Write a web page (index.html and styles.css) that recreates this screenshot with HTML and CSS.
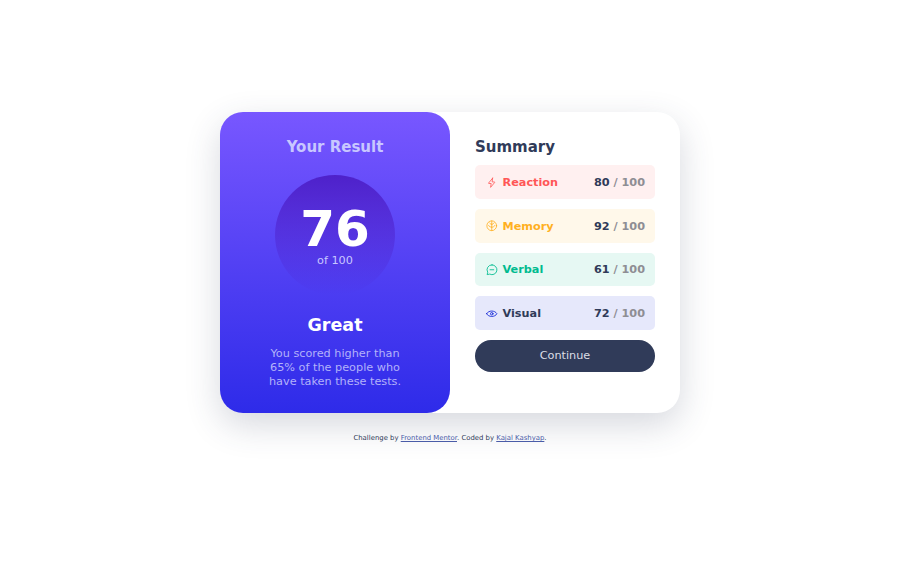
FILE: index.html
```html
<!DOCTYPE html>
<html>
<head>
  <meta name="viewport" content="width=device-width, initial-scale=1">
  <title>Results summary</title>
  <link rel="stylesheet" href="styles.css">
</head>
<body>

<main class="card">
  <section class="result">
    <h2 class="result-title">Your Result</h2>
    <div class="score-circle">
      <span class="score">76</span>
      <span class="score-of">of 100</span>
    </div>
    <h3 class="grade">Great</h3>
    <p class="result-text">You scored higher than 65% of the people who have taken these tests.</p>
  </section>

  <section class="summary">
    <h2 class="summary-title">Summary</h2>
    <ul class="summary-list">
      <li class="row reaction">
        <span class="row-name">
          <svg class="icon" viewBox="0 0 20 20" fill="none" stroke="currentColor" stroke-width="1.4" stroke-linecap="round" stroke-linejoin="round"><path d="M11.500 2 4.500 10.500c-.3.400 0 .8.400.8h4.100l-1 6.700 7.100-8.500c.3-.4 0-.9-.4-.9h-4l.8-6.600Z"/></svg>
          Reaction
        </span>
        <span class="row-score"><b>80</b> / 100</span>
      </li>
      <li class="row memory">
        <span class="row-name">
          <svg class="icon" viewBox="0 0 20 20" fill="none" stroke="currentColor" stroke-width="1.4" stroke-linecap="round" stroke-linejoin="round"><circle cx="10" cy="10" r="8.500"/><path d="M10 1.500v17M10 7.500C8.500 7.500 7 6.500 6 5M10 12.500c-2.500 0-4.500-1-5.500-3M10 7.500c1.500 0 3-1 4-2.500M10 12.500c2.500 0 4.500-1 5.500-3"/></svg>
          Memory
        </span>
        <span class="row-score"><b>92</b> / 100</span>
      </li>
      <li class="row verbal">
        <span class="row-name">
          <svg class="icon" viewBox="0 0 20 20" fill="none" stroke="currentColor" stroke-width="1.500" stroke-linecap="round" stroke-linejoin="round"><path d="M10.500 1.500a8.500 8.500 0 1 1-4 16l-4.500 1 1-4.200a8.500 8.500 0 0 1 7.500-12.800Z"/><path d="M7 10h6.500"/></svg>
          Verbal
        </span>
        <span class="row-score"><b>61</b> / 100</span>
      </li>
      <li class="row visual">
        <span class="row-name">
          <svg class="icon" viewBox="0 0 20 20" fill="none" stroke="currentColor" stroke-width="1.500" stroke-linecap="round" stroke-linejoin="round"><path d="M1 10C2.800 7 6.200 5.300 10 5.300s7.200 1.700 9 4.700c-1.800 3-5.200 4.700-9 4.700S2.800 13 1 10Z"/><circle cx="10" cy="10" r="2.200"/></svg>
          Visual
        </span>
        <span class="row-score"><b>72</b> / 100</span>
      </li>
    </ul>
    <button class="continue-btn">Continue</button>
  </section>
</main>

<footer class="attribution">
  Challenge by <a href="#">Frontend Mentor</a>. Coded by <a href="#">Kajal Kashyap</a>.
</footer>

</body>
</html>
```

FILE: styles.css
```css
* {
  box-sizing: border-box;
}

body {
  font-family: "DejaVu Sans", sans-serif;
  margin: 0;
  padding-top: 112px;
  min-height: 100vh;
  background-color: #fff;
  display: flex;
  flex-direction: column;
  align-items: center;
}

.card {
  display: flex;
  width: 460px;
  height: 301px;
  background-color: #fff;
  border-radius: 23px;
  box-shadow: 0 12px 35px rgba(48, 59, 89, 0.2);
}

.result {
  width: 230px;
  padding-top: 26px;
  border-radius: 23px;
  background: linear-gradient(180deg, #7857ff 0%, #2e2be9 100%);
  display: flex;
  flex-direction: column;
  align-items: center;
  text-align: center;
}

.result-title {
  margin: 0;
  font-size: 15px;
  line-height: 18px;
  font-weight: bold;
  color: #c8c7ff;
}

.score-circle {
  width: 120px;
  height: 120px;
  margin-top: 19px;
  padding-top: 5px;
  border-radius: 50%;
  background: linear-gradient(180deg, #4e21ca 0%, rgba(36, 33, 203, 0) 100%);
  display: flex;
  flex-direction: column;
  align-items: center;
  justify-content: center;
  gap: 3px;
}

.score {
  font-size: 50px;
  line-height: 44px;
  font-weight: bold;
  color: #fff;
}

.score-of {
  font-size: 11.250px;
  line-height: 14px;
  color: #c8c7ff;
}

.grade {
  margin: 19px 0 0;
  font-size: 17.500px;
  line-height: 22px;
  font-weight: bold;
  color: #fff;
}

.result-text {
  margin: 11px 0 0;
  width: 140px;
  font-size: 11.250px;
  line-height: 14px;
  color: #b3b2fa;
}

.summary {
  flex: 1;
  padding: 26px 25px 25px;
}

.summary-title {
  margin: 0;
  font-size: 15px;
  line-height: 18px;
  font-weight: bold;
  color: #303b59;
}

.summary-list {
  list-style: none;
  margin: 9px 0 0;
  padding: 0;
}

.row {
  display: flex;
  align-items: center;
  justify-content: space-between;
  height: 33.750px;
  margin-bottom: 10px;
  padding: 1px 10px 0 11px;
  border-radius: 5px;
  font-size: 11.250px;
  font-weight: bold;
}

.row-name {
  display: flex;
  align-items: center;
  gap: 5px;
}

.icon {
  width: 11.500px;
  height: 11.500px;
}

.row-score {
  color: #8e8e94;
}

.row-score b {
  color: #303b59;
}

.reaction {
  background-color: #fff0f0;
  color: #ff5757;
}

.memory {
  background-color: #fff8ea;
  color: #ffb01f;
}

.verbal {
  background-color: #e6f8f3;
  color: #00bb8f;
}

.visual {
  background-color: #e6e8fb;
  color: #303b59;
}

.visual .icon {
  color: #1125d6;
}

.continue-btn {
  display: block;
  width: 100%;
  height: 31.500px;
  border: none;
  border-radius: 16px;
  background-color: #303b59;
  color: #dcdee6;
  font-family: inherit;
  font-size: 11.250px;
  cursor: pointer;
}

.attribution {
  margin-top: 20px;
  font-size: 6.900px;
  line-height: 10px;
  color: #303b59;
}

.attribution a {
  color: #4a5ca8;
}
```
